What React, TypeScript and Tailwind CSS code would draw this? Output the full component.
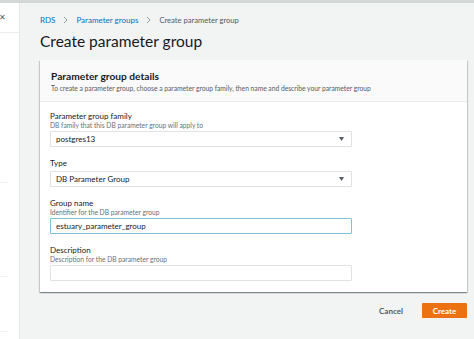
export default function App() {
  return (
    <div className="w-[474px] h-[339px] overflow-hidden flex flex-col bg-[#f2f3f3] font-['Lato',sans-serif] text-[#16191f]">
      {/* top strip */}
      <div className="h-[3px] bg-[#d5d8d8]" />

      <div className="flex flex-1">
        {/* side nav (collapsed) */}
        <aside className="w-[20px] bg-white border-r border-[#e4e6e6] flex flex-col">
          <div className="h-[30px] border-b border-[#eaeded] relative">
            <span className="absolute left-[-1px] top-[10px] text-[8px] leading-[8px] text-[#545b64]">✕</span>
          </div>
          <div className="mt-[149px] h-px w-[8px] bg-[#f1f2f2]" />
          <div className="mt-[93px] h-px w-[8px] bg-[#f1f2f2]" />
          <div className="mt-[54px] h-px w-[8px] bg-[#f1f2f2]" />
        </aside>

        <main className="flex-1 pl-[20px] pr-[7px] pt-[12px]">
          {/* breadcrumb */}
          <nav className="flex items-center h-[10px] text-[8px] leading-[10px]">
            <span className="text-[#0073bb]">RDS</span>
            <Chevron />
            <span className="text-[#0073bb]">Parameter groups</span>
            <Chevron />
            <span className="text-[#545b64] text-[7.6px]">Create parameter group</span>
          </nav>

          <h1 className="mt-[6px] text-[15.5px] leading-[20px] font-normal">Create parameter group</h1>

          {/* card */}
          <section className="mt-[9px] bg-white shadow-[0_1px_1px_0_rgba(0,28,36,0.3),1px_1px_1px_0_rgba(0,28,36,0.15),-1px_1px_1px_0_rgba(0,28,36,0.15)]">
            <header className="bg-[#fafafa] border-b border-[#eaeded] px-[11px] pt-[10px] pb-[9px]">
              <h2 className="text-[10.2px] leading-[12px] font-bold">Parameter group details</h2>
              <p className="mt-[2px] text-[6.7px] leading-[8px] text-[#545b64]">
                To create a parameter group, choose a parameter group family, then name and describe your parameter group
              </p>
            </header>

            <div className="px-[10px] pt-[9px] pb-[11px] flex flex-col gap-[11px]">
              <Field label="Parameter group family" hint="DB family that this DB parameter group will apply to">
                <Select value="postgres13" />
              </Field>
              <Field label="Type">
                <Select value="DB Parameter Group" />
              </Field>
              <Field label="Group name" hint="Identifier for the DB parameter group">
                <div className="w-[302px] h-[16px] border border-[#7cc3d8] rounded-[1px] px-[5px] flex items-center text-[8px]">
                  estuary_parameter_group
                </div>
              </Field>
              <Field label="Description" hint="Description for the DB parameter group">
                <div className="w-[302px] h-[16px] border border-[#dfe3e3] rounded-[1px]" />
              </Field>
            </div>
          </section>

          {/* actions */}
          <div className="mt-[11px] flex items-center justify-end gap-[19px]">
            <button className="text-[8px] leading-[10px] font-bold text-[#545b64]">Cancel</button>
            <button className="w-[45px] h-[15px] bg-[#ec7211] text-white text-[8px] font-bold flex items-center justify-center rounded-[1px]">
              Create
            </button>
          </div>
        </main>
      </div>
    </div>
  )
}

function Chevron() {
  return (
    <svg width="7" height="8" viewBox="0 0 7 8" className="mx-[7px]">
      <path d="M2 1 L5 4 L2 7" fill="none" stroke="#879596" strokeWidth="0.9" />
    </svg>
  )
}

function Field({ label, hint, children }: { label: string; hint?: string; children: React.ReactNode }) {
  return (
    <div className="flex flex-col">
      <label className="text-[8px] leading-[10px]">{label}</label>
      {hint && <span className="text-[6.7px] leading-[8px] text-[#687078]">{hint}</span>}
      <div className={hint ? 'mt-[2px]' : 'mt-[3px]'}>{children}</div>
    </div>
  )
}

function Select({ value }: { value: string }) {
  return (
    <div className="w-[302px] h-[16px] border border-[#dfe3e3] rounded-[1px] pl-[5px] pr-[7px] flex items-center justify-between text-[8px]">
      <span>{value}</span>
      <svg width="5" height="4" viewBox="0 0 5 4">
        <path d="M0 0 H5 L2.5 4 Z" fill="#545b64" />
      </svg>
    </div>
  )
}
